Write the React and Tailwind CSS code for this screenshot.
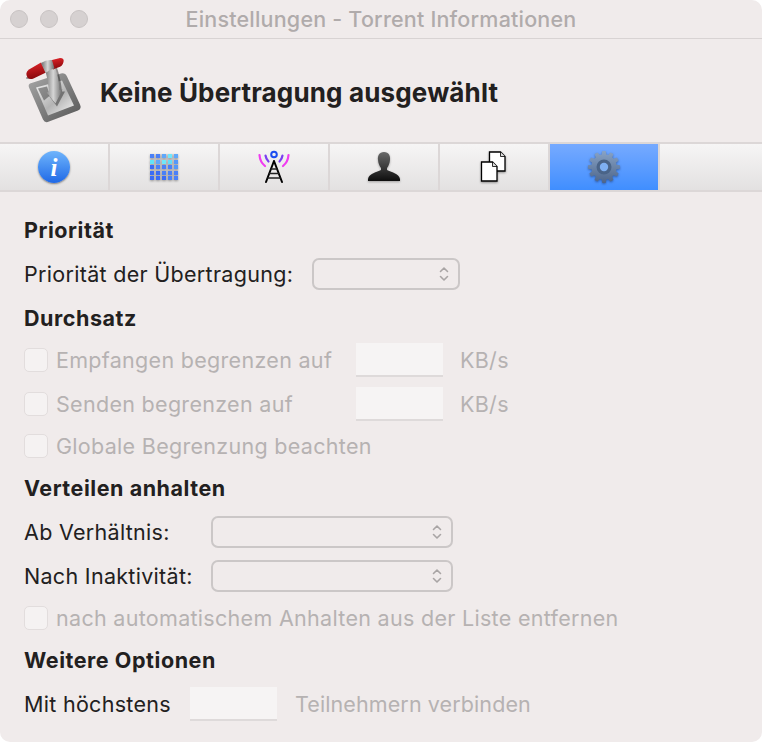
import React from 'react';

const gearPath = () => {
  const cx = 24, cy = 24, teeth = 12, outer = 16, inner = 12.6;
  let d = '';
  for (let i = 0; i < teeth; i++) {
    const a = (i / teeth) * Math.PI * 2 - Math.PI / 2;
    const step = (Math.PI * 2) / teeth;
    const pts = [
      [inner, a - step * 0.36],
      [outer, a - step * 0.2],
      [outer, a + step * 0.2],
      [inner, a + step * 0.36],
    ];
    pts.forEach(([r, t], j) => {
      d += `${i === 0 && j === 0 ? 'M' : 'L'}${(cx + r * Math.cos(t)).toFixed(2)} ${(cy + r * Math.sin(t)).toFixed(2)} `;
    });
  }
  return d + 'Z';
};

// drawn in page coordinates, hence the viewBox offset
const AppIcon = () => (
  <svg width="64" height="70" viewBox="22 55.5 64 70" className="shrink-0">
    <defs>
      <linearGradient id="plate" x1="0" y1="0" x2="1" y2="1">
        <stop offset="0" stopColor="#f4f4f4" />
        <stop offset="0.55" stopColor="#b4b4b4" />
        <stop offset="1" stopColor="#f6f6f6" />
      </linearGradient>
      <linearGradient id="rim" x1="0" y1="0" x2="1" y2="1">
        <stop offset="0" stopColor="#a8a8a8" />
        <stop offset="1" stopColor="#565656" />
      </linearGradient>
      <linearGradient id="red" x1="0" y1="0" x2="0.2" y2="1">
        <stop offset="0" stopColor="#e4252a" />
        <stop offset="1" stopColor="#8a080c" />
      </linearGradient>
      <linearGradient id="shaft" x1="0" y1="0" x2="1" y2="0">
        <stop offset="0" stopColor="#6c6c6c" />
        <stop offset="0.5" stopColor="#d6d6d6" />
        <stop offset="1" stopColor="#6a6a6a" />
      </linearGradient>
    </defs>
    <path d="M30 83 Q28 84 29 87 L43 119 Q45 123 49 121 L78 110 Q82 108 80 104 L67 76 Q65 72 61 73 Z" fill="url(#rim)" />
    <path d="M36 87 L62 80 L74 105 L48 115 Z" fill="url(#plate)" />
    <path d="M38 88 L47 86 L50 95 L44 100 Z" fill="#3a3a3a" opacity="0.5" />
    <path d="M46 68 C49 76 50 84 51 93 L48 94 L57 106 L65 91 L62 91 C61 80 59 72 55 62 Z" fill="#222" opacity="0.45" />
    <path d="M44 67 C47 74 48 82 49 91 L46.5 92 L55.5 103 L62.5 89 L59.5 89.5 C59 79 57 71 53 61 Z" fill="url(#shaft)" />
    <path d="M26 77 L29 76 L29.5 78 L26.5 78.5 Z" fill="#8a8a8a" />
    <path d="M27.5 77 Q24.5 72.5 29 69 L41 62 L46 72 L33.5 78 Q29.5 79.5 27.5 77 Z" fill="url(#red)" />
    <path d="M50 60 L60 57.5 Q64.5 57.5 63.5 61.5 Q62.5 66 58 67 L53 69 Z" fill="url(#red)" />
    <path d="M41 62.5 Q46 59 52 59.5 L54.5 68 Q50 68.5 45.5 72.5 Z" fill="url(#shaft)" />
  </svg>
);

const InfoIcon = () => (
  <div className="w-8 h-8 rounded-full bg-gradient-to-b from-[#6fb4fb] to-[#1f68e6] shadow-[0_1px_2px_rgba(0,0,0,0.45)] flex items-center justify-center">
    <span className="text-white italic font-bold text-[25px] leading-none font-['Liberation_Serif',serif]">i</span>
  </div>
);

const peerColors = [
  ['#4a80f8', '#4a80f8', '#5fa8fa', '#6fe8fa', '#5fa8fa'],
  ['#62e4f8', '#5fa8fa', '#6fe8fa', '#62dcf8', '#5498f8'],
  ['#3a6cf6', '#4a80f8', '#4a80f8', '#4a80f8', '#5498f8'],
  ['#3a6cf6', '#3a6cf6', '#4a80f8', '#4a80f8', '#4a80f8'],
  ['#3a6cf6', '#3a6cf6', '#3a6cf6', '#4a80f8', '#4a80f8'],
];

const PiecesIcon = () => (
  <div className="grid grid-cols-5 gap-[1.5px] bg-[#9a9ca8]/30 drop-shadow-[0_1px_1px_rgba(0,0,0,0.35)]">
    {peerColors.flat().map((color, idx) => (
      <div key={idx} className="w-[4.5px] h-[4px]" style={{ backgroundColor: color }} />
    ))}
  </div>
);

const AntennaIcon = () => (
  <svg width="34" height="34" viewBox="0 0 34 34">
    <g fill="none" strokeLinecap="round">
      <path d="M2.5 5 Q3 12 8 16" stroke="#f03cf0" strokeWidth="2.2" />
      <path d="M31.5 5 Q31 12 26 16" stroke="#f03cf0" strokeWidth="2.2" />
      <path d="M8.5 5.5 Q9 9 11.5 11.5" stroke="#7a3ff0" strokeWidth="2.2" />
      <path d="M25.5 5.5 Q25 9 22.5 11.5" stroke="#7a3ff0" strokeWidth="2.2" />
      <circle cx="17" cy="4.5" r="2.8" stroke="#1d4ef0" strokeWidth="2" />
      <path d="M17 11 L9 32 M17 11 L25 32" stroke="#000" strokeWidth="2" />
      <path d="M14 19 H20 M12.5 23.5 H21.5 M11 28 H23" stroke="#222" strokeWidth="1.5" />
    </g>
  </svg>
);

const PersonIcon = () => (
  <svg width="34" height="32" viewBox="0 0 34 32" className="drop-shadow-[0_1px_1px_rgba(0,0,0,0.3)]">
    <defs>
      <linearGradient id="person" x1="0" y1="0" x2="0" y2="1">
        <stop offset="0" stopColor="#6a6a6a" />
        <stop offset="1" stopColor="#0e0e0e" />
      </linearGradient>
    </defs>
    <path d="M17 1 C12 1 10.5 5 11 9 C11.3 12.5 12.5 15 14 17 L14 19 C10 21.5 2 22 1 28 L1 30 L33 30 L33 28 C32 22 24 21.5 20 19 L20 17 C21.5 15 22.7 12.5 23 9 C23.5 5 22 1 17 1 Z" fill="url(#person)" />
  </svg>
);

const FilesIcon = () => (
  <svg width="28" height="32" viewBox="0 0 28 32" className="drop-shadow-[0_1px_1px_rgba(0,0,0,0.4)]">
    <g fill="#fff" stroke="#000" strokeWidth="1.3" strokeLinejoin="miter">
      <path d="M9.5 1 H20.5 L25 5.5 V20 H9.5 Z" />
      <path d="M20.5 1 V5.5 H25" fill="#ddd" strokeWidth="0.8" />
      <path d="M1.5 11 H12.5 L17 15.5 V30 H1.5 Z" />
      <path d="M12.5 11 V15.5 H17" fill="#ddd" strokeWidth="0.8" />
    </g>
  </svg>
);

const GearIcon = () => (
  <svg width="34" height="34" viewBox="7 7 34 34" className="drop-shadow-[0_1px_1px_rgba(20,40,90,0.5)]">
    <defs>
      <linearGradient id="gear" x1="0" y1="0" x2="0" y2="1">
        <stop offset="0" stopColor="#88a3c6" />
        <stop offset="1" stopColor="#4d658a" />
      </linearGradient>
    </defs>
    <path d={gearPath()} fill="url(#gear)" />
    <circle cx="24" cy="24" r="7.5" fill="#4a6488" />
    <circle cx="24" cy="24" r="4.2" fill="#7fb0f2" />
  </svg>
);

const tabs = [
  { id: 'info', icon: InfoIcon },
  { id: 'pieces', icon: PiecesIcon },
  { id: 'trackers', icon: AntennaIcon },
  { id: 'peers', icon: PersonIcon },
  { id: 'files', icon: FilesIcon },
  { id: 'options', icon: GearIcon, active: true },
];

const Heading = ({ children, className = '' }) => (
  <h3 className={`h-8 flex items-center text-[21.5px] font-bold text-[#222020] tracking-[0.55px] ${className}`}>{children}</h3>
);

const Row = ({ children, className = '' }) => (
  <div className={`h-8 flex items-center text-[21.5px] tracking-[0.3px] ${className}`}>{children}</div>
);

const Checkbox = () => (
  <div className="w-6 h-6 shrink-0 rounded-[5px] bg-[#f5f2f2] border border-[#e2dddd] mr-2" />
);

const NumberField = () => (
  <div className="w-[87px] h-[34px] shrink-0 bg-[#f6f4f4] border-b-2 border-[#dedada]" />
);

const Select = ({ className = '' }) => (
  <div className={`h-[32px] shrink-0 rounded-[7px] border-2 border-[#cbc7c7] flex items-center justify-end pr-[9px] ${className}`}>
    <svg width="10" height="16" viewBox="0 0 10 16" fill="none" stroke="#a9a5a5" strokeWidth="1.6" strokeLinecap="round" strokeLinejoin="round">
      <path d="M1.5 5.5 L5 2 L8.5 5.5" />
      <path d="M1.5 10.5 L5 14 L8.5 10.5" />
    </svg>
  </div>
);

const Muted = ({ children, className = '' }) => (
  <span className={`text-[#b6b2b2] whitespace-nowrap ${className}`}>{children}</span>
);

const Label = ({ children, className = '' }) => (
  <span className={`text-[#222020] whitespace-nowrap ${className}`}>{children}</span>
);

export default function App() {
  return (
    <div className="w-[762px] h-[742px] bg-white overflow-hidden font-['Inter',sans-serif]">
      <div className="h-full bg-[#f0ebeb] rounded-[10px] overflow-hidden flex flex-col">
        {/* title bar */}
        <div className="relative h-[39px] shrink-0 border-b border-[#d8d3d3] flex items-center justify-center">
          <div className="absolute left-[10px] top-[10px] flex gap-3">
            <div className="w-[18px] h-[18px] rounded-full bg-[#d6d1d1] border border-[#c8c3c3]" />
            <div className="w-[18px] h-[18px] rounded-full bg-[#d6d1d1] border border-[#c8c3c3]" />
            <div className="w-[18px] h-[18px] rounded-full bg-[#d6d1d1] border border-[#c8c3c3]" />
          </div>
          <span className="text-[21.5px] tracking-[0.2px] text-[#b0abab] font-medium">Einstellungen - Torrent Informationen</span>
        </div>

        {/* header */}
        <div className="h-[103px] shrink-0 flex items-center pl-[22px]">
          <AppIcon />
          <h1 className="ml-[14px] mt-[3px] text-[26px] tracking-[0.15px] font-bold text-[#222020] whitespace-nowrap">Keine Übertragung ausgewählt</h1>
        </div>

        {/* tabs */}
        <div className="h-[50px] shrink-0 flex border-y-2 border-[#dcd7d7] bg-gradient-to-b from-[#f6f5f5] to-[#e3e1e1]">
          {tabs.map((tab) => {
            const Icon = tab.icon;
            return (
              <div
                key={tab.id}
                className={`w-[110px] shrink-0 flex items-center justify-center border-r-2 border-[#dcd7d7] ${tab.active ? 'bg-gradient-to-b from-[#76aaff] to-[#3f8eff]' : ''}`}
              >
                <Icon />
              </div>
            );
          })}
        </div>

        {/* options */}
        <div className="flex flex-col px-6 pt-[22px]">
          <Heading>Priorität</Heading>
          <Row className="mt-3">
            <Label>Priorität der Übertragung:</Label>
            <Select className="w-[148px] ml-[19px]" />
          </Row>
          <Heading className="mt-3">Durchsatz</Heading>
          <Row className="mt-[10px]">
            <Checkbox />
            <Muted className="w-[300px]">Empfangen begrenzen auf</Muted>
            <NumberField />
            <Muted className="ml-[17px]">KB/s</Muted>
          </Row>
          <Row className="mt-3">
            <Checkbox />
            <Muted className="w-[300px]">Senden begrenzen auf</Muted>
            <NumberField />
            <Muted className="ml-[17px]">KB/s</Muted>
          </Row>
          <Row className="mt-[10px]">
            <Checkbox />
            <Muted>Globale Begrenzung beachten</Muted>
          </Row>
          <Heading className="mt-[10px]">Verteilen anhalten</Heading>
          <Row className="mt-3">
            <Label className="w-[187px]">Ab Verhältnis:</Label>
            <Select className="w-[242px]" />
          </Row>
          <Row className="mt-3">
            <Label className="w-[187px]">Nach Inaktivität:</Label>
            <Select className="w-[242px]" />
          </Row>
          <Row className="mt-[10px]">
            <Checkbox />
            <Muted>nach automatischem Anhalten aus der Liste entfernen</Muted>
          </Row>
          <Heading className="mt-[10px]">Weitere Optionen</Heading>
          <Row className="mt-3">
            <Label className="w-[166px]">Mit höchstens</Label>
            <NumberField />
            <Muted className="ml-[18px] tracking-[0.1px]">Teilnehmern verbinden</Muted>
          </Row>
        </div>
      </div>
    </div>
  );
}
